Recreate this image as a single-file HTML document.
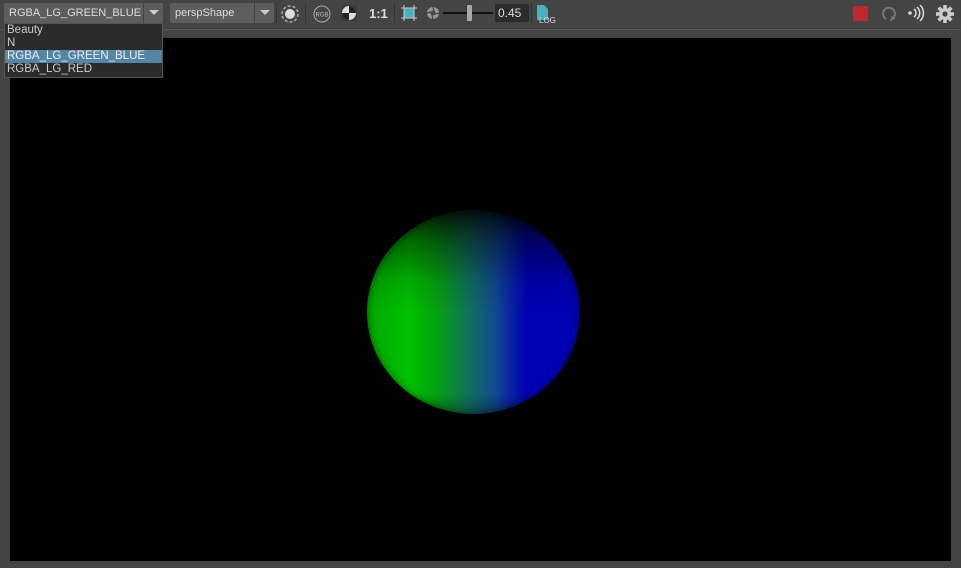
<!DOCTYPE html>
<html><head><meta charset="utf-8"><style>
*{margin:0;padding:0;box-sizing:border-box}
body{width:961px;height:568px;background:#444;position:relative;overflow:hidden;font-family:"Liberation Sans",sans-serif;color:#ccc}
.abs{position:absolute}
.combo{position:absolute;top:3px;height:20px;background:#5d5d5d;border-radius:2px;font-size:11px;color:#ddd;line-height:20px;padding-left:5px;white-space:nowrap;overflow:hidden}
.arr{position:absolute;right:0;top:0;width:20px;height:20px;background:#5d5d5d;border-left:1px solid #444}
.arr:after{content:"";position:absolute;left:5px;top:7px;border-left:5px solid transparent;border-right:5px solid transparent;border-top:5px solid #ccc}
.sep{position:absolute;top:3px;width:1px;height:20px;background:#333}
#vp{position:absolute;left:10px;top:38px;width:941px;height:523px;background:#000}
#menu{position:absolute;left:4px;top:23px;width:159px;height:55px;background:#2b2b2b;border:1px solid #555;font-size:11.5px;color:#ccc}
#menu div{height:13px;line-height:13px;padding-left:2px}
#menu .sel{background:#5285a6;color:#eee}
</style></head><body>
<div class="abs" style="left:0;top:28px;width:961px;height:1px;background:#3a3a3a"></div>
<div class="abs" style="left:0;top:29px;width:961px;height:1px;background:#555"></div>
<div id="vp"></div>
<div class="abs" style="left:367px;top:210px;width:213px;height:204px;border-radius:50%;background:linear-gradient(180deg,rgba(0,0,0,.85) 0%,rgba(0,0,0,.45) 15%,rgba(0,0,0,.1) 35%,rgba(0,0,0,0) 50%,rgba(0,0,0,0) 90%,rgba(0,0,0,.3) 100%),linear-gradient(90deg,#00a800 0%,#00c000 20%,#05a010 33%,#107060 48%,#104a90 60%,#0000b4 75%,#0000b4 100%);box-shadow:inset 0 0 8px rgba(0,0,0,.5)"></div>

<div class="combo" style="left:4px;width:159px">RGBA_LG_GREEN_BLUE<div class="arr"></div></div>
<div class="combo" style="left:170px;width:104px">perspShape<div class="arr"></div></div>
<div class="sep" style="left:276px"></div>
<svg class="abs" style="left:280px;top:4px" width="20" height="20"><circle cx="10" cy="10" r="8" fill="none" stroke="#aaa" stroke-width="1.5" stroke-dasharray="3 2"/><circle cx="10" cy="10" r="5" fill="#ddd"/></svg>
<div class="sep" style="left:305px"></div>
<svg class="abs" style="left:312px;top:4px" width="20" height="20"><circle cx="10" cy="10" r="8" fill="none" stroke="#aaa"/><text x="10" y="12.5" font-size="6" fill="#bbb" text-anchor="middle" font-family="Liberation Sans">RGB</text></svg>
<svg class="abs" style="left:341px;top:5px" width="16" height="16"><rect width="16" height="16" fill="#3a3a3a"/><circle cx="8" cy="8" r="7" fill="#ddd"/><path d="M8 1A7 7 0 0 1 15 8H8zM8 8H1A7 7 0 0 0 8 15z" fill="#222"/></svg>
<div class="abs" style="left:369px;top:6px;font-size:13px;font-weight:bold;color:#ddd">1:1</div>
<div class="sep" style="left:394px"></div>
<svg class="abs" style="left:400px;top:4px" width="18" height="18"><rect x="4" y="4" width="10" height="10" fill="#44b0c0" stroke="#ddd"/><path d="M4 1V17M14 1V17M1 4H17M1 14H17" stroke="#ccc"/></svg>
<svg class="abs" style="left:425px;top:5px" width="16" height="16"><circle cx="8" cy="8" r="6" fill="#999"/><circle cx="8" cy="8" r="2.5" fill="#444"/><path d="M8 2L9 6M14 8L10 9M8 14L7 10M2 8L6 7" stroke="#444" stroke-width="1.2"/></svg>
<div class="abs" style="left:443px;top:12px;width:50px;height:2px;background:#111"></div>
<div class="abs" style="left:467px;top:5px;width:5px;height:16px;background:#aaa;border-radius:1px"></div>
<div class="abs" style="left:495px;top:4px;width:34px;height:18px;background:#2b2b2b;border-radius:2px;font-size:12px;color:#ddd;line-height:18px;padding-left:3px">0.45</div>
<div class="sep" style="left:531px"></div>
<svg class="abs" style="left:536px;top:4px" width="22" height="20"><path d="M1 1H8L12 5V16H1z" fill="#44b0c0"/><text x="3" y="19" font-size="8" fill="#ddd" font-family="Liberation Sans">LOG</text></svg>

<div class="abs" style="left:853px;top:6px;width:15px;height:15px;background:#c0282e"></div>
<svg class="abs" style="left:879px;top:4px" width="20" height="20"><path d="M13 15A6 6 0 1 0 7 15" fill="none" stroke="#777" stroke-width="2"/><path d="M12 17L13 13L16 15" fill="none" stroke="#777" stroke-width="1.5"/></svg>
<svg class="abs" style="left:906px;top:3px" width="22" height="20"><circle cx="4" cy="10" r="1.8" fill="#ddd"/><path d="M8 6A5 5 0 0 1 8 14M11 4A8 8 0 0 1 11 16M14 2A11 11 0 0 1 14 18" fill="none" stroke="#ddd" stroke-width="1.5"/></svg>
<svg class="abs" style="left:935px;top:4px" width="20" height="20"><g fill="#ccc" transform="translate(10 10)"><circle r="6"/><rect x="-1.8" y="-9" width="3.6" height="18"/><rect x="-9" y="-1.8" width="18" height="3.6"/><rect x="-1.8" y="-9" width="3.6" height="18" transform="rotate(45)"/><rect x="-1.8" y="-9" width="3.6" height="18" transform="rotate(-45)"/><circle r="2.6" fill="#444"/></g></svg>

<div id="menu"><div>Beauty</div><div>N</div><div class="sel">RGBA_LG_GREEN_BLUE</div><div>RGBA_LG_RED</div></div>
</body></html>
